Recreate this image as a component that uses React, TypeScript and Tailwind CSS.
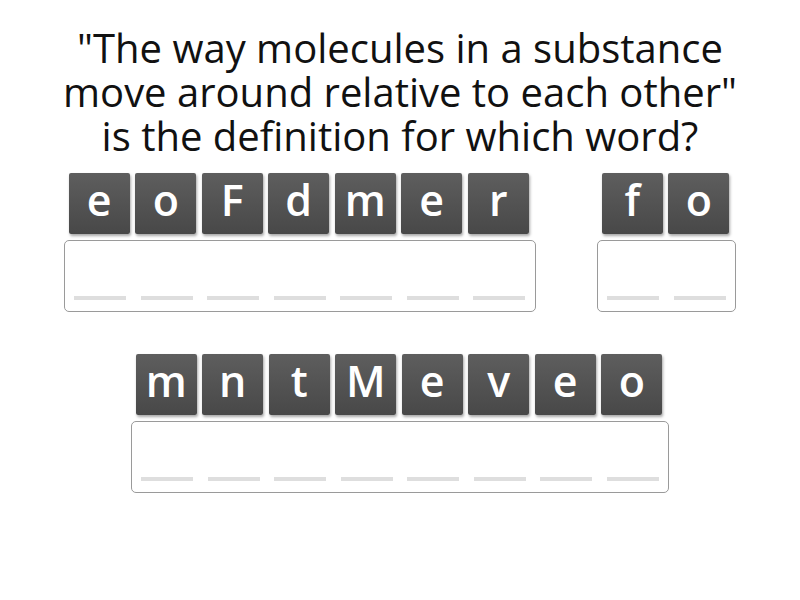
const rows: string[][][] = [
  [
    ["e", "o", "F", "d", "m", "e", "r"],
    ["f", "o"],
  ],
  [["m", "n", "t", "M", "e", "v", "e", "o"]],
];

const Tile = ({ ch }: { ch: string }) => (
  <div className="w-[66.5px] flex justify-center">
    <div className="w-[61px] h-[61px] flex items-center justify-center rounded-[2px] bg-gradient-to-b from-[#5e5e5e] to-[#484848] shadow-[1px_2px_3px_rgba(0,0,0,0.35)] text-white text-[43px] font-semibold leading-none pb-[8px]">
      {ch}
    </div>
  </div>
);

const Word = ({ letters }: { letters: string[] }) => (
  <div className="flex flex-col items-stretch">
    <div className="flex px-[2.25px] mb-[6px]">
      {letters.map((ch, i) => (
        <Tile key={i} ch={ch} />
      ))}
    </div>
    <div className="h-[72px] border border-[#9a9a9a] rounded-[5px] flex items-end px-[2.25px] pb-[11px]">
      {letters.map((_, i) => (
        <div key={i} className="w-[66.5px] flex justify-center">
          <div className="w-[52px] h-[4px] bg-[#dedede]" />
        </div>
      ))}
    </div>
  </div>
);

export default function App() {
  return (
    <div
      className="w-[800px] h-[600px] bg-white flex flex-col items-center"
      style={{ fontFamily: '"Open Sans", sans-serif' }}
    >
      <div className="mt-[26px] text-center text-[40px] leading-[44px] text-[#111] w-[760px]">
        <div>"The way molecules in a substance</div>
        <div>move around relative to each other"</div>
        <div>is the definition for which word?</div>
      </div>
      <div className="mt-[15px] flex flex-col items-center gap-[42px]">
        {rows.map((row, r) => (
          <div key={r} className="flex gap-[61px]">
            {row.map((w, i) => (
              <Word key={i} letters={w} />
            ))}
          </div>
        ))}
      </div>
    </div>
  );
}
